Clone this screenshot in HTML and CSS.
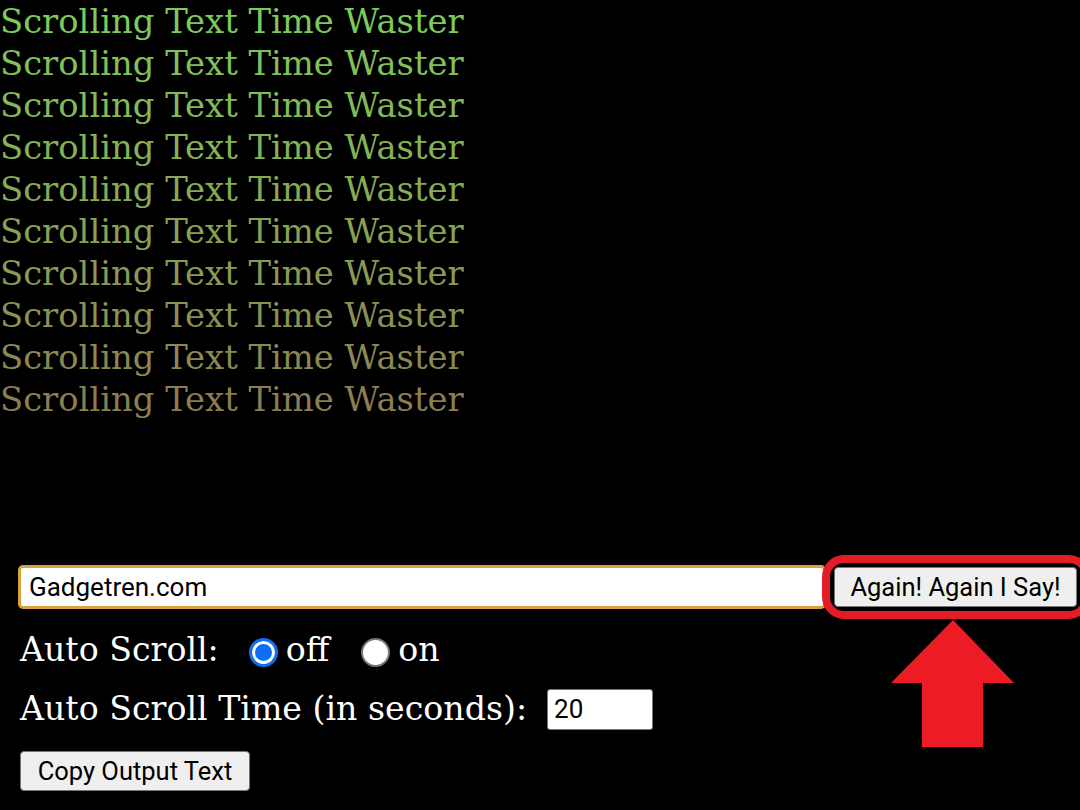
FILE: index.html
```html
<!DOCTYPE html>
<html>
<head>
<meta charset="utf-8">
<link rel="stylesheet" href="styles.css">
</head>
<body>
<div class="output">
  <div class="lines">
    <div class="line" style="color:#7ccb5c">Scrolling Text Time Waster</div>
    <div class="line" style="color:#7dc95c">Scrolling Text Time Waster</div>
    <div class="line" style="color:#80c15a">Scrolling Text Time Waster</div>
    <div class="line" style="color:#82ba59">Scrolling Text Time Waster</div>
    <div class="line" style="color:#84b257">Scrolling Text Time Waster</div>
    <div class="line" style="color:#86aa55">Scrolling Text Time Waster</div>
    <div class="line" style="color:#88a254">Scrolling Text Time Waster</div>
    <div class="line" style="color:#899a54">Scrolling Text Time Waster</div>
    <div class="line" style="color:#8a9153">Scrolling Text Time Waster</div>
    <div class="line" style="color:#8b8852">Scrolling Text Time Waster</div>
    <div class="line" style="color:#8b7e50">Scrolling Text Time Waster</div>
  </div>
</div>
<div class="form">
  <div class="row-main">
    <input class="text-in" type="text" value="Gadgetren.com">
    <span class="again-wrap">
      <button class="btn again">Again! Again I Say!</button>
      <svg class="arrow" width="124" height="128" viewBox="0 0 124 128">
        <polygon points="62,0 123,63 92,63 92,127 31,127 31,63 0,63" fill="#ed1c24"/>
      </svg>
    </span>
  </div>
  <div class="row-radio">
    <span class="label">Auto Scroll:</span>
    <label class="opt"><input type="radio" name="as" class="radio" checked><span>off</span></label>
    <label class="opt"><input type="radio" name="as" class="radio"><span>on</span></label>
  </div>
  <div class="row-time">
    <span class="label">Auto Scroll Time (in seconds):</span>
    <input class="num-in" type="text" value="20">
  </div>
  <div class="row-copy">
    <button class="btn copy">Copy Output Text</button>
  </div>
</div>
</body>
</html>
```

FILE: styles.css
```css
html, body {
  margin: 0;
  padding: 0;
  background: #000;
}
body {
  width: 1080px;
  height: 810px;
  overflow: hidden;
  font-family: "DejaVu Serif", "Liberation Serif", serif;
}
.output {
  height: 565px;
  overflow: hidden;
}
.lines {
  margin-top: -41px;
}
.line {
  font-size: 33.8px;
  line-height: 42px;
  white-space: nowrap;
}
.form {
  display: flex;
  flex-direction: column;
  padding-left: 18px;
}
.row-main {
  display: flex;
  align-items: center;
  height: 44px;
}
.text-in {
  box-sizing: border-box;
  width: 808px;
  height: 44px;
  margin: 0;
  border: 3px solid #d8a23c;
  border-radius: 5px;
  background: #fff;
  padding: 0 8px;
  font-family: Roboto, "Liberation Sans", sans-serif;
  font-size: 26px;
  color: #000;
  outline: none;
}
.again-wrap {
  position: relative;
  margin-left: 8px;
  display: flex;
}
.again-wrap::after {
  content: "";
  position: absolute;
  left: -12px;
  top: -12px;
  right: -14px;
  bottom: -12px;
  border: 8px solid #e21d25;
  border-radius: 22px;
  pointer-events: none;
}
.btn {
  box-sizing: border-box;
  margin: 0;
  background: #efefef;
  border: 1px solid #767676;
  border-radius: 4px;
  font-family: Roboto, "Liberation Sans", sans-serif;
  color: #000;
  padding: 0;
  white-space: nowrap;
}
.again {
  width: 243px;
  height: 40px;
  font-size: 25.5px;
}
.arrow {
  position: absolute;
  left: 57px;
  top: 53px;
}
.label {
  color: #fff;
  font-size: 33.2px;
  line-height: 42px;
  white-space: nowrap;
}
.row-radio {
  display: flex;
  align-items: center;
  height: 42px;
  margin-top: 20px;
  padding-left: 2px;
}
.opt {
  display: flex;
  align-items: center;
  color: #fff;
  font-size: 33.2px;
  line-height: 42px;
}
.opt:first-of-type {
  margin-left: 30px;
}
.opt + .opt {
  margin-left: 32px;
}
.radio {
  appearance: none;
  -webkit-appearance: none;
  box-sizing: border-box;
  width: 29px;
  height: 29px;
  margin: 5px 8px 0 0;
  border-radius: 50%;
  border: 2px solid #767676;
  background: #fff;
}
.radio:checked {
  border: 3px solid #0b6ef4;
  background: #0b6ef4;
  box-shadow: inset 0 0 0 3px #fff;
}
.row-time {
  display: flex;
  align-items: center;
  height: 42px;
  margin-top: 17px;
  padding-left: 2px;
}
.num-in {
  box-sizing: border-box;
  width: 106px;
  height: 41px;
  margin: 0 0 0 20px;
  border: 1px solid #767676;
  border-radius: 3px;
  background: #fff;
  padding: 0 6px;
  font-family: Roboto, "Liberation Sans", sans-serif;
  font-size: 26px;
  color: #000;
  outline: none;
}
.row-copy {
  display: flex;
  margin-top: 21px;
  padding-left: 2px;
}
.copy {
  width: 230px;
  height: 40px;
  font-size: 25.5px;
}
```
